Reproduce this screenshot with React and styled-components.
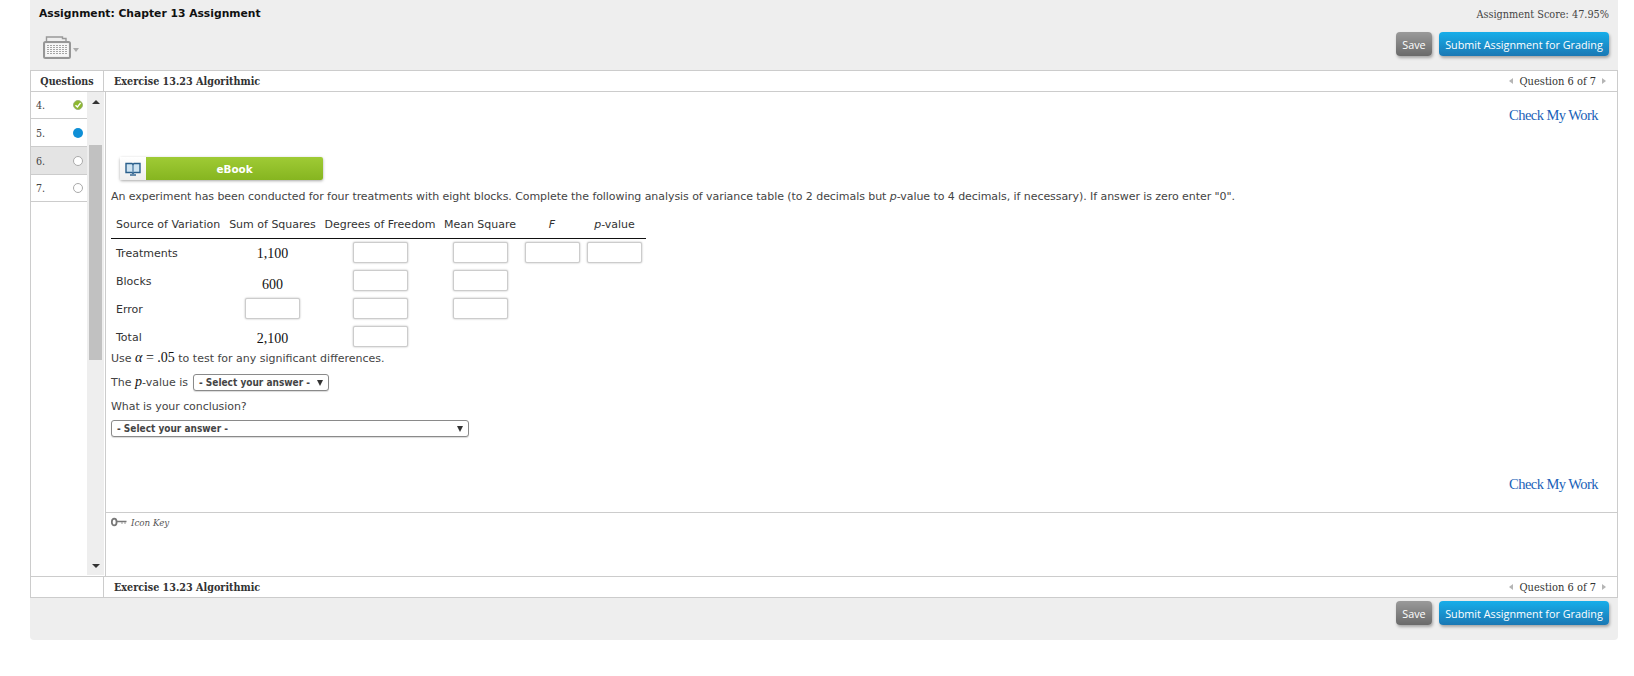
import React from "react"
import styled, {createGlobalStyle} from "styled-components"

const GlobalStyle = createGlobalStyle`
  html, body {
    margin: 0;
    padding: 0;
    background: #fff;
  }
  body {
    font-family: "DejaVu Sans", Verdana, sans-serif;
    font-size: 11px;
    color: #333;
  }
`

const serif = `"DejaVu Serif Condensed", "DejaVu Serif", serif`

const Page = styled.div`
  width: 1588px;
  margin-left: 30px;
`
const TopBar = styled.div`
  background: #eee;
  height: 70px;
  box-sizing: border-box;
  padding: 7px 9px 0 9px;
  display: flex;
  justify-content: space-between;
`
const TopLeft = styled.div`
  display: flex;
  flex-direction: column;
`
const AssignmentTitle = styled.div`
  font-weight: bold;
  font-size: 10.75px;
  line-height: 14px;
  color: #111;
`
const KeyboardButton = styled.div`
  display: flex;
  align-items: flex-end;
  margin: 15px 0 0 4px;
  gap: 2px;
`
const KeyboardCaret = styled.span`
  width: 0;
  height: 0;
  margin-bottom: 7px;
  border-left: 3px solid transparent;
  border-right: 3px solid transparent;
  border-top: 4px solid #aaa;
`
const TopRight = styled.div`
  display: flex;
  flex-direction: column;
  align-items: flex-end;
`
const Score = styled.div`
  font-family: ${serif};
  font-size: 10.8px;
  line-height: 14px;
  margin-top: 1px;
  color: #444;
`
const Actions = styled.div`
  display: flex;
  gap: 7px;
  margin-top: ${({$top}) => $top}px;
`
const Button = styled.div`
  height: 24px;
  box-sizing: border-box;
  display: flex;
  align-items: center;
  justify-content: center;
  width: ${({$w}) => $w}px;
  border-radius: 4px;
  color: #fff;
  font-family: "Open Sans", sans-serif;
  font-size: 10.8px;
  background: ${({$blue}) =>
    $blue ? "linear-gradient(#17aeea, #1a78b4)" : "linear-gradient(#9a9a9a, #6a6a6a)"};
  box-shadow: 1px 2px 3px rgba(0, 0, 0, 0.3);
`
const Frame = styled.div`
  border-left: 1px solid #ccc;
  border-right: 1px solid #ccc;
`
const InfoRow = styled.div`
  display: flex;
  height: 21px;
  box-sizing: border-box;
  border-top: 1px solid #ccc;
`
const InfoLeft = styled.div`
  width: 73px;
  box-sizing: border-box;
  border-right: 1px solid #ccc;
  font-family: ${serif};
  font-weight: bold;
  font-size: 10.6px;
  line-height: 20px;
  color: #333;
  text-align: center;
`
const InfoMain = styled.div`
  flex: 1;
  display: flex;
  justify-content: space-between;
  align-items: center;
  padding: 0 11px 0 10px;
`
const ExerciseName = styled.div`
  font-family: ${serif};
  font-weight: bold;
  font-size: 10.7px;
  color: #333;
`
const Pager = styled.div`
  display: flex;
  align-items: center;
  gap: 6px;
  font-family: ${serif};
  font-size: 11px;
  color: #333;
`
const PagerArrow = styled.span`
  width: 0;
  height: 0;
  border-top: 3px solid transparent;
  border-bottom: 3px solid transparent;
  border-right: ${({$left}) => ($left ? "4px solid #b5b5b5" : "none")};
  border-left: ${({$left}) => ($left ? "none" : "4px solid #b5b5b5")};
`
const Body = styled.div`
  display: flex;
  height: 485px;
  box-sizing: border-box;
  border-top: 1px solid #ccc;
`
const QuestionList = styled.div`
  width: 56px;
`
const QuestionItem = styled.div`
  height: ${({$h}) => $h}px;
  box-sizing: border-box;
  display: flex;
  align-items: center;
  justify-content: space-between;
  padding: 0 4px 0 5px;
  border-bottom: 1px solid #ccc;
  background: ${({$active}) => ($active ? "#e4e4e4" : "#fff")};
  font-family: ${serif};
  font-size: 10.6px;
  color: #444;
`
const Dot = styled.span`
  width: 10px;
  height: 10px;
  border-radius: 50%;
  box-sizing: border-box;
  display: flex;
  align-items: center;
  justify-content: center;
  border: ${({$kind}) =>
    $kind === "open" ? "1px solid #aaa" : $kind === "done" ? "1px solid #9fb37a" : "none"};
  background: ${({$kind}) =>
    $kind === "done" ? "#8db92e" : $kind === "current" ? "#0f8fd6" : "#fff"};
`
const ScrollTrack = styled.div`
  width: 17px;
  background: #eee;
  position: relative;
  margin-bottom: 1px;
`
const ScrollArrow = styled.span`
  position: absolute;
  left: 5px;
  top: ${({$up}) => ($up ? "8px" : "auto")};
  bottom: ${({$up}) => ($up ? "auto" : "7px")};
  width: 0;
  height: 0;
  border-left: 4px solid transparent;
  border-right: 4px solid transparent;
  border-bottom: ${({$up}) => ($up ? "4px solid #333" : "none")};
  border-top: ${({$up}) => ($up ? "none" : "4px solid #333")};
`
const ScrollThumb = styled.div`
  position: absolute;
  left: 2px;
  top: 53px;
  width: 13px;
  height: 215px;
  background: #c1c1c1;
`
const Main = styled.div`
  flex: 1;
  margin-left: 1px;
  border-left: 1px solid #ccc;
  display: flex;
  flex-direction: column;
`
const Content = styled.div`
  height: 420px;
  box-sizing: border-box;
  padding: 0 19px 0 5px;
  display: flex;
  flex-direction: column;
`
const CheckLink = styled.div`
  font-family: "Liberation Serif", serif;
  font-size: 14.5px;
  letter-spacing: -0.55px;
  color: #1a62b8;
  text-align: right;
  margin-top: ${({$top}) => $top}px;
  line-height: 18px;
`
const EbookButton = styled.div`
  display: flex;
  width: 203px;
  height: 23px;
  margin: 33px 0 0 9px;
  box-shadow: 0 1px 3px rgba(0, 0, 0, 0.35);
  border-radius: 2px;
`
const EbookIcon = styled.div`
  width: 26px;
  background: linear-gradient(#fff, #eee);
  display: flex;
  align-items: center;
  justify-content: center;
`
const EbookLabel = styled.div`
  flex: 1;
  background: linear-gradient(#9fcb35, #86b520);
  color: #fff;
  font-weight: bold;
  font-size: 10.4px;
  display: flex;
  align-items: center;
  justify-content: center;
  border-radius: 0 2px 2px 0;
`
const Paragraph = styled.div`
  line-height: 14px;
  white-space: nowrap;
  letter-spacing: -0.065px;
  margin-top: ${({$top}) => $top}px;
  color: #444;
`
const Table = styled.table`
  border-collapse: collapse;
  margin: 7px 0 0 0;
  width: 535px;
  table-layout: fixed;
`
const HeadCell = styled.th`
  font-weight: normal;
  font-style: ${({$italic}) => ($italic ? "italic" : "normal")};
  font-size: 11px;
  color: #333;
  height: 27px;
  padding: 0;
  box-sizing: border-box;
  text-align: ${({$left}) => ($left ? "left" : "center")};
  padding-left: ${({$left}) => ($left ? "5px" : "0")};
  border-bottom: 1px solid #111;
  white-space: nowrap;
`
const Cell = styled.td`
  height: 28px;
  box-sizing: border-box;
  padding: 0;
  text-align: ${({$left}) => ($left ? "left" : "center")};
  padding-left: ${({$left}) => ($left ? "5px" : "0")};
  padding-top: ${({$left}) => ($left ? "2px" : "0")};
  color: #333;
`
const MathValue = styled.span`
  font-family: "Liberation Serif", serif;
  font-size: 14px;
  line-height: 14px;
  color: #111;
  vertical-align: ${({$drop}) => -($drop || 0)}px;
`
const MathItalic = styled.span`
  font-family: "Liberation Serif", serif;
  font-style: italic;
  font-size: 14px;
  line-height: 14px;
  color: #111;
`
const AnswerBox = styled.div`
  display: inline-block;
  vertical-align: middle;
  width: 55px;
  height: 21px;
  box-sizing: border-box;
  background: #fff;
  border: 1px solid #ccc;
  border-radius: 2px;
  box-shadow: 0 0 2px rgba(0, 0, 0, 0.3);
`
const InlineRow = styled.div`
  display: flex;
  align-items: center;
  gap: 5px;
  margin-top: ${({$top}) => $top}px;
  color: #444;
  letter-spacing: ${({$tight}) => ($tight ? "-0.06px" : "0")};
  line-height: 16px;
`
const SelectBox = styled.div`
  width: ${({$w}) => $w}px;
  height: 17px;
  box-sizing: border-box;
  border: 1px solid #8a8a8a;
  border-radius: 3px;
  background: #fff;
  display: flex;
  align-items: center;
  justify-content: space-between;
  padding: 0 5px;
  font-family: "DejaVu Sans Condensed", "DejaVu Sans", sans-serif;
  font-weight: bold;
  font-size: 10px;
  white-space: nowrap;
  color: #444;
  margin-top: ${({$top}) => $top || 0}px;
  box-shadow: 0 1px 1px rgba(0, 0, 0, 0.15);
`
const SelectCaret = styled.span`
  flex: none;
  width: 0;
  height: 0;
  border-left: 3px solid transparent;
  border-right: 3px solid transparent;
  border-top: 6px solid #333;
`
const IconKeyRow = styled.div`
  border-top: 1px solid #ccc;
  flex: 1;
  padding: 1px 0 0 5px;
`
const IconKeyInner = styled.div`
  display: flex;
  align-items: center;
  gap: 4px;
  height: 16px;
`
const IconKeyLabel = styled.span`
  font-family: ${serif};
  font-style: italic;
  font-size: 9.7px;
  line-height: 15px;
  color: #555;
`
const BottomBar = styled.div`
  background: #eee;
  height: 43px;
  box-sizing: border-box;
  border-top: 1px solid #ccc;
  border-radius: 0 0 4px 4px;
  padding-right: 9px;
  display: flex;
  justify-content: flex-end;
`

const KeyboardIcon = () => (
  <svg width="28" height="23" viewBox="0 0 28 23">
    <path d="M3.5 6V1h16v1.5H23V6" fill="#eee" stroke="#999" strokeWidth="1.4" />
    <rect x="1" y="6" width="26" height="16" rx="1.5" fill="#eee" stroke="#969696" strokeWidth="2" />
    <rect x="3" y="8" width="22" height="12" fill="#f7f7f7" />
    {[9, 11, 13, 15, 17].map((y) => (
      <path key={y} d={`M4 ${y + 0.5}h20`} stroke="#a5a5a5" strokeDasharray="2 1" />
    ))}
  </svg>
)

const BookIcon = () => (
  <svg width="16" height="14" viewBox="0 0 16 14">
    <path d="M1 1.5h6l1 1 1-1h6v9H9.5l-1.5 1-1.5-1H1z" fill="#cfe4f2" stroke="#2a5f8c" strokeWidth="1.4" />
    <path d="M8 3v8" stroke="#2a5f8c" />
    <path d="M5 13h6" stroke="#2a5f8c" strokeWidth="1.4" />
  </svg>
)

const KeyIcon = () => (
  <svg width="16" height="10" viewBox="0 0 16 10">
    <ellipse cx="3.2" cy="5" rx="2.4" ry="3.4" fill="none" stroke="#777" strokeWidth="1.8" />
    <path d="M5.5 4.5h10" stroke="#777" strokeWidth="1.5" fill="none" />
    <path d="M10 6h2M13 6h2" stroke="#999" strokeWidth="1" fill="none" />
  </svg>
)

const CheckMark = () => (
  <svg width="8" height="8" viewBox="0 0 8 8">
    <path d="M1.5 4.2 3.4 6 6.6 1.8" fill="none" stroke="#fff" strokeWidth="1.4" />
  </svg>
)

const questions = [
  {num: "4.", kind: "done", h: 27},
  {num: "5.", kind: "current", h: 28},
  {num: "6.", kind: "open", h: 28, active: true},
  {num: "7.", kind: "open", h: 27},
]

const InfoBar = ({left}) => (
  <InfoRow>
    <InfoLeft>{left}</InfoLeft>
    <InfoMain>
      <ExerciseName>Exercise 13.23 Algorithmic</ExerciseName>
      <Pager>
        <PagerArrow $left />
        Question 6 of 7
        <PagerArrow />
      </Pager>
    </InfoMain>
  </InfoRow>
)

const ActionButtons = ({top}) => (
  <Actions $top={top}>
    <Button $w={36}>Save</Button>
    <Button $w={170} $blue>Submit Assignment for Grading</Button>
  </Actions>
)

export default function App() {
  return (
    <Page>
      <GlobalStyle />
      <TopBar>
        <TopLeft>
          <AssignmentTitle>Assignment: Chapter 13 Assignment</AssignmentTitle>
          <KeyboardButton>
            <KeyboardIcon />
            <KeyboardCaret />
          </KeyboardButton>
        </TopLeft>
        <TopRight>
          <Score>Assignment Score: 47.95%</Score>
          <ActionButtons top={10} />
        </TopRight>
      </TopBar>
      <Frame>
        <InfoBar left="Questions" />
        <Body>
          <QuestionList>
            {questions.map((q) => (
              <QuestionItem key={q.num} $h={q.h} $active={q.active}>
                {q.num}
                <Dot $kind={q.kind}>{q.kind === "done" && <CheckMark />}</Dot>
              </QuestionItem>
            ))}
          </QuestionList>
          <ScrollTrack>
            <ScrollArrow $up />
            <ScrollThumb />
            <ScrollArrow />
          </ScrollTrack>
          <Main>
            <Content>
              <CheckLink $top={14}>Check My Work</CheckLink>
              <EbookButton>
                <EbookIcon><BookIcon /></EbookIcon>
                <EbookLabel>eBook</EbookLabel>
              </EbookButton>
              <Paragraph $top={10}>
                An experiment has been conducted for four treatments with eight blocks. Complete the following analysis of variance table (to 2 decimals but <i>p</i>-value to 4 decimals, if necessary). If answer is zero enter "0".
              </Paragraph>
              <Table>
                <colgroup>
                  <col style={{width: 113}} />
                  <col style={{width: 97}} />
                  <col style={{width: 118}} />
                  <col style={{width: 82}} />
                  <col style={{width: 62}} />
                  <col style={{width: 63}} />
                </colgroup>
                <thead>
                  <tr>
                    <HeadCell $left>Source of Variation</HeadCell>
                    <HeadCell>Sum of Squares</HeadCell>
                    <HeadCell>Degrees of Freedom</HeadCell>
                    <HeadCell>Mean Square</HeadCell>
                    <HeadCell $italic>F</HeadCell>
                    <HeadCell><i>p</i>-value</HeadCell>
                  </tr>
                </thead>
                <tbody>
                  <tr>
                    <Cell $left>Treatments</Cell>
                    <Cell><MathValue $drop={5}>1,100</MathValue></Cell>
                    <Cell><AnswerBox /></Cell>
                    <Cell><AnswerBox /></Cell>
                    <Cell><AnswerBox /></Cell>
                    <Cell><AnswerBox /></Cell>
                  </tr>
                  <tr>
                    <Cell $left>Blocks</Cell>
                    <Cell><MathValue $drop={11}>600</MathValue></Cell>
                    <Cell><AnswerBox /></Cell>
                    <Cell><AnswerBox /></Cell>
                    <Cell />
                    <Cell />
                  </tr>
                  <tr>
                    <Cell $left>Error</Cell>
                    <Cell><AnswerBox /></Cell>
                    <Cell><AnswerBox /></Cell>
                    <Cell><AnswerBox /></Cell>
                    <Cell />
                    <Cell />
                  </tr>
                  <tr>
                    <Cell $left>Total</Cell>
                    <Cell><MathValue $drop={6}>2,100</MathValue></Cell>
                    <Cell><AnswerBox /></Cell>
                    <Cell />
                    <Cell />
                    <Cell />
                  </tr>
                </tbody>
              </Table>
              <InlineRow $top={1}>
                <span>Use <MathItalic>α</MathItalic> <MathValue>= .05</MathValue> to test for any significant differences.</span>
              </InlineRow>
              <InlineRow $top={7}>
                <span>The <MathItalic>p</MathItalic>-value is</span>
                <SelectBox $w={136}>- Select your answer - <SelectCaret /></SelectBox>
              </InlineRow>
              <InlineRow $top={8} $tight>What is your conclusion?</InlineRow>
              <SelectBox $w={358} $top={5}>- Select your answer - <SelectCaret /></SelectBox>
              <CheckLink $top={38}>Check My Work</CheckLink>
            </Content>
            <IconKeyRow>
              <IconKeyInner>
                <KeyIcon />
                <IconKeyLabel>Icon Key</IconKeyLabel>
              </IconKeyInner>
            </IconKeyRow>
          </Main>
        </Body>
        <InfoBar left="" />
      </Frame>
      <BottomBar>
        <ActionButtons top={3} />
      </BottomBar>
    </Page>
  )
}
